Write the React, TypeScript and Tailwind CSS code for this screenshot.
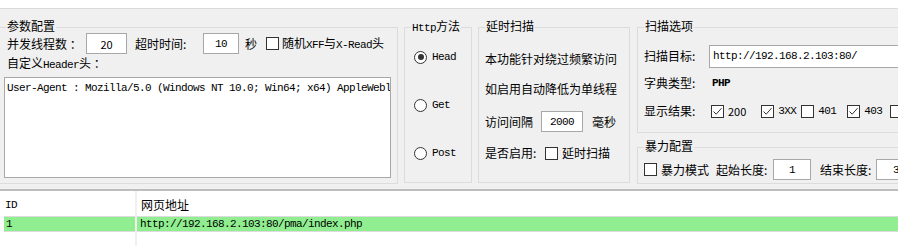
import type { ReactNode } from "react";

// latin text in the original is the half-width SimSun face, ~6px per glyph
const mono = "font-['Liberation_Mono','Noto_Sans_CJK_SC',monospace] text-[11px] tracking-[-0.6px]";

function M({ children, className = "" }: { children: ReactNode; className?: string }) {
  return <span className={`${mono} ${className}`}>{children}</span>;
}

function GroupBox({ title, className = "", children }: { title: ReactNode; className?: string; children: ReactNode }) {
  return (
    <div className={`relative shrink-0 border border-[#dcdcdc] ${className}`}>
      <span className="absolute left-[6px] top-[-10px] whitespace-nowrap bg-[#f0f0f0] px-px leading-[16px]">{title}</span>
      {children}
    </div>
  );
}

function TextBox({ className = "", children }: { className?: string; children?: ReactNode }) {
  return <div className={`flex shrink-0 items-center border border-[#a8a8a8] bg-white ${className}`}>{children}</div>;
}

function CheckBox({ checked = false, className = "" }: { checked?: boolean; className?: string }) {
  return (
    <span className={`flex h-[13px] w-[13px] shrink-0 items-center justify-center border border-[#333] bg-white ${className}`}>
      {checked && (
        <svg width="11" height="11" viewBox="0 0 11 11">
          <path d="M1.5 5.5 L4.2 8.2 L9.5 2.2" stroke="#333" strokeWidth="1" fill="none" />
        </svg>
      )}
    </span>
  );
}

function Radio({ checked = false }: { checked?: boolean }) {
  return (
    <span className="flex h-[13px] w-[13px] shrink-0 items-center justify-center rounded-full border border-[#333] bg-white">
      {checked && <span className="h-[6px] w-[6px] rounded-full bg-[#333]" />}
    </span>
  );
}

export default function App() {
  return (
    <div className="flex h-[246px] w-[898px] flex-col overflow-hidden bg-[#f0f0f0] font-['Noto_Sans_CJK_SC','Noto_Sans',sans-serif] text-[12px] leading-[16px] text-black">
      <div className="h-[9px] shrink-0 border-b border-[#dadada] bg-white" />

      <div className="flex h-[180px] shrink-0">
        {/* 参数配置 */}
        <GroupBox title="参数配置" className="mt-[18px] h-[157px] w-[398px] border-l-0 pt-[5px]">
          <div className="flex h-[21px] items-center pl-[7px]">
            <span className="w-[79px] shrink-0">并发线程数 ：</span>
            <TextBox className="h-[21px] w-[41px] justify-center text-[11px]">20</TextBox>
            <span className="ml-[8px] w-[68px] shrink-0">超时时间:</span>
            <TextBox className="h-[21px] w-[36px] justify-center">
              <M>10</M>
            </TextBox>
            <span className="ml-[6px]">秒</span>
            <CheckBox className="ml-[9px]" />
            <span className="ml-[3px] whitespace-nowrap">
              随机<M>XFF</M>与<M>X-Read</M>头
            </span>
          </div>
          <div className="mt-[1px] h-[16px] pl-[7px]">
            自定义<M>Header</M>头 ：
          </div>
          <div className={`ml-[4px] mt-[6px] h-[101px] w-[387px] overflow-hidden whitespace-nowrap border border-[#a8a8a8] bg-white pl-[2px] pt-[3px] leading-[14px] ${mono}`}>
            User-Agent : Mozilla/5.0 (Windows NT 10.0; Win64; x64) AppleWebl
          </div>
        </GroupBox>

        {/* Http方法 */}
        <GroupBox
          title={
            <>
              <M>Http</M>方法
            </>
          }
          className="ml-[6px] mt-[18px] h-[156px] w-[68px] pl-[9px] pt-[21px]"
        >
          <div className="flex flex-col gap-[32px]">
            <div className="flex h-[16px] items-center gap-[5px]">
              <Radio checked />
              <M>Head</M>
            </div>
            <div className="flex h-[16px] items-center gap-[5px]">
              <Radio />
              <M>Get</M>
            </div>
            <div className="flex h-[16px] items-center gap-[5px]">
              <Radio />
              <M>Post</M>
            </div>
          </div>
        </GroupBox>

        {/* 延时扫描 */}
        <GroupBox title="延时扫描" className="ml-[6px] mt-[18px] h-[156px] w-[152px] pl-[6px] pt-[23px]">
          <div className="h-[16px] whitespace-nowrap">本功能针对绕过频繁访问</div>
          <div className="mt-[14px] h-[16px] whitespace-nowrap">如启用自动降低为单线程</div>
          <div className="mt-[14px] flex h-[21px] items-center">
            <span>访问间隔</span>
            <TextBox className="ml-[8px] h-[21px] w-[42px] justify-center">
              <M>2000</M>
            </TextBox>
            <span className="ml-[9px]">毫秒</span>
          </div>
          <div className="mt-[13px] flex h-[16px] items-center">
            <span className="w-[60px] shrink-0">是否启用:</span>
            <CheckBox />
            <span className="ml-[4px]">延时扫描</span>
          </div>
        </GroupBox>

        <div className="ml-[7px] flex w-[280px] shrink-0 flex-col">
          {/* 扫描选项 */}
          <GroupBox title="扫描选项" className="mt-[18px] h-[106px] pl-[6px] pt-[17px]">
            <div className="flex h-[22px] items-center">
              <span className="w-[65px] shrink-0">扫描目标:</span>
              <TextBox className="h-[23px] w-[220px] pl-[3px]">
                <M>http://192.168.2.103:80/</M>
              </TextBox>
            </div>
            <div className="mt-[8px] flex h-[16px] items-center">
              <span className="w-[68px] shrink-0">字典类型:</span>
              <M className="font-bold">PHP</M>
            </div>
            <div className="mt-[12px] flex h-[16px] items-center whitespace-nowrap">
              <span className="w-[67px] shrink-0">显示结果:</span>
              <CheckBox checked />
              <span className="ml-[4px] text-[11px]">200</span>
              <CheckBox checked className="ml-[15px]" />
              <M className="ml-[4px]">3XX</M>
              <CheckBox className="ml-[5px]" />
              <M className="ml-[4px]">401</M>
              <CheckBox checked className="ml-[11px]" />
              <M className="ml-[4px]">403</M>
              <CheckBox className="ml-[8px]" />
            </div>
          </GroupBox>

          {/* 暴力配置 */}
          <GroupBox title="暴力配置" className="mt-[14px] h-[37px] pl-[6px] pt-[11px]">
            <div className="flex h-[21px] items-center whitespace-nowrap">
              <CheckBox />
              <span className="ml-[4px]">暴力模式</span>
              <span className="ml-[7px] w-[57px] shrink-0">起始长度:</span>
              <TextBox className="h-[21px] w-[38px] justify-center">
                <M>1</M>
              </TextBox>
              <span className="ml-[9px] w-[56px] shrink-0">结束长度:</span>
              <TextBox className="h-[21px] w-[40px] justify-center">
                <M>3</M>
              </TextBox>
            </div>
          </GroupBox>
        </div>
      </div>

      {/* 结果列表 */}
      <div className="flex flex-1 border-t-2 border-[#bdbdbd] bg-white">
        <div className="w-[135px] shrink-0 pl-[4px]">
          <div className="flex h-[25px] items-center pl-px pt-[2px]">
            <M>ID</M>
          </div>
          <div className="flex h-[16px] items-center border-y border-[#dcdcdc] bg-[#90ee90] pl-[2px]">
            <M>1</M>
          </div>
        </div>
        <div className="flex-1 border-l-2 border-[#f0f0f0]">
          <div className="flex h-[25px] items-center pl-[4px] pt-[2px]">网页地址</div>
          <div className="flex h-[16px] items-center border-y border-[#dcdcdc] bg-[#90ee90] pl-[3px]">
            <M>http://192.168.2.103:80/pma/index.php</M>
          </div>
        </div>
      </div>
    </div>
  );
}
